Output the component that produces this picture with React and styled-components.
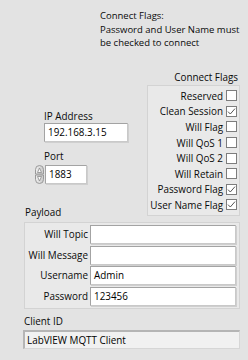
import React from "react";
import styled, { createGlobalStyle } from "styled-components";

const GlobalStyle = createGlobalStyle`
  html, body { margin: 0; padding: 0; background: #e3e3e3; }
  body {
    font-family: "Open Sans", "Noto Sans", "DejaVu Sans", sans-serif;
    font-size: 9.9px;
    color: #0a0a0a;
  }
  * { box-sizing: border-box; }
`;

const Page = styled.div`
  width: 248px;
  height: 360px;
  padding-top: 9px;
  display: flex;
  flex-direction: column;
  overflow: hidden;
  background: #e3e3e3;
`;

const Note = styled.div`
  margin-left: 100px;
  font-size: 9.5px;
  line-height: 13.5px;
  white-space: nowrap;
`;

const Middle = styled.div`
  margin-top: 20.5px;
  display: flex;
  justify-content: space-between;
`;

const LeftCol = styled.div`
  display: flex;
  flex-direction: column;
  padding-top: 39px;
`;

const Label = styled.div`
  line-height: 14px;
  height: 14px;
  white-space: nowrap;
  margin-left: ${(p) => p.$indent || 0}px;
  margin-top: ${(p) => p.$top || 0}px;
  text-align: ${(p) => (p.$right ? "right" : "left")};
  padding-right: ${(p) => (p.$right ? 2 : 0)}px;
`;

const Field = styled.div`
  width: ${(p) => (p.$width ? `${p.$width}px` : "auto")};
  height: 19px;
  background: ${(p) => (p.$readonly ? "#f1f1f1" : "#ffffff")};
  border-style: solid;
  border-width: ${(p) => (p.$readonly ? "2px 1px 1px 2px" : "1px")};
  border-color: ${(p) =>
    p.$readonly ? "#b5b5b5 #d6d6d6 #d6d6d6 #b5b5b5" : "#a3a3a3 #c9c9c9 #c9c9c9 #a3a3a3"};
  box-shadow: ${(p) => (p.$readonly ? "none" : "1px 1px 0 #cfcfcf")};
  padding-left: ${(p) => (p.$readonly ? 2 : 3)}px;
  line-height: ${(p) => (p.$readonly ? 16 : 17)}px;
  white-space: nowrap;
  overflow: hidden;
  color: #000;
`;

const FieldWrap = styled.div`
  margin-left: ${(p) => p.$indent || 0}px;
`;

const PortRow = styled.div`
  display: flex;
  align-items: center;
  gap: 1px;
  margin-left: -9px;
  margin-top: 2px;
`;

const RightCol = styled.div`
  width: 93px;
  margin-right: 8px;
  display: flex;
  flex-direction: column;
`;

const Cluster = styled.div`
  background: #e9e9e9;
  border: 1px solid #d3d3d3;
  padding: 2px;
`;

const FlagsBox = styled(Cluster)`
  margin-top: 1px;
  display: flex;
  flex-direction: column;
`;

const FlagRow = styled.label`
  height: 15.6px;
  display: flex;
  align-items: center;
  justify-content: flex-end;
  gap: 3px;
  white-space: nowrap;
`;

const Box = styled.span`
  width: 11px;
  height: 11px;
  background: #fff;
  border: 1px solid #7d7d7d;
  display: flex;
  align-items: center;
  justify-content: center;
  flex: none;
`;

const PayloadBox = styled(Cluster)`
  margin: 3px 8px 0 24px;
  display: grid;
  grid-template-columns: 62px 1fr;
  column-gap: 2px;
  row-gap: 1.7px;
  padding: 2px 3px 2px 1px;
`;

const RowLabel = styled.div`
  text-align: right;
  line-height: 19px;
  white-space: nowrap;
`;

const ClientSection = styled.div`
  margin: 5px 8px 0 23px;
  display: flex;
  flex-direction: column;
  gap: 2px;
`;

function Check({ checked }) {
  return (
    <Box>
      {checked && (
        <svg width="9" height="9" viewBox="0 0 9 9">
          <polyline points="1,4.6 3.3,7 8,1.6" fill="none" stroke="#555" strokeWidth="1" />
        </svg>
      )}
    </Box>
  );
}

function Spinner() {
  return (
    <svg width="9" height="19" viewBox="0 0 9 19">
      <defs>
        <linearGradient id="sg" x1="0" x2="1" y1="0" y2="0">
          <stop offset="0" stopColor="#f0f0f0" />
          <stop offset="1" stopColor="#c9c9c9" />
        </linearGradient>
      </defs>
      <path d="M0.5 9 V4.5 A4 4 0 0 1 8.5 4.5 V9 Z" fill="url(#sg)" stroke="#999" />
      <path d="M0.5 10 V14.5 A4 4 0 0 0 8.5 14.5 V10 Z" fill="url(#sg)" stroke="#999" />
      <polygon points="2.5,7.5 4.5,3 6.5,7.5" fill="#fafafa" stroke="#8a8a8a" strokeWidth="0.8" />
      <polygon points="2.5,11.5 4.5,16 6.5,11.5" fill="#fafafa" stroke="#8a8a8a" strokeWidth="0.8" />
    </svg>
  );
}

const flags = [
  ["Reserved", false],
  ["Clean Session", true],
  ["Will Flag", false],
  ["Will QoS 1", false],
  ["Will QoS 2", false],
  ["Will Retain", false],
  ["Password Flag", true],
  ["User Name Flag", true],
];

const payload = [
  ["Will Topic", ""],
  ["Will Message", ""],
  ["Username", "Admin"],
  ["Password", "123456"],
];

export default function App() {
  return (
    <>
      <GlobalStyle />
      <Page>
        <Note>
          Connect Flags:
          <br />
          Password and User Name must
          <br />
          be checked to connect
        </Note>
        <Middle>
          <LeftCol>
            <Label $indent={44}>IP Address</Label>
            <FieldWrap $indent={44}>
              <Field $width={84}>192.168.3.15</Field>
            </FieldWrap>
            <Label $indent={44} $top={7}>Port</Label>
            <FieldWrap $indent={44}>
              <PortRow>
                <Spinner />
                <Field $width={42}>1883</Field>
              </PortRow>
            </FieldWrap>
            <Label $indent={25} $top={21}>Payload</Label>
          </LeftCol>
          <RightCol>
            <Label $right>Connect Flags</Label>
            <FlagsBox>
              {flags.map(([name, on]) => (
                <FlagRow key={name}>
                  {name}
                  <Check checked={on} />
                </FlagRow>
              ))}
            </FlagsBox>
          </RightCol>
        </Middle>
        <PayloadBox>
          {payload.map(([name, val]) => (
            <React.Fragment key={name}>
              <RowLabel>{name}</RowLabel>
              <Field>{val}</Field>
            </React.Fragment>
          ))}
        </PayloadBox>
        <ClientSection>
          <Label $indent={1}>Client ID</Label>
          <Field $readonly>LabVIEW MQTT Client</Field>
        </ClientSection>
      </Page>
    </>
  );
}
